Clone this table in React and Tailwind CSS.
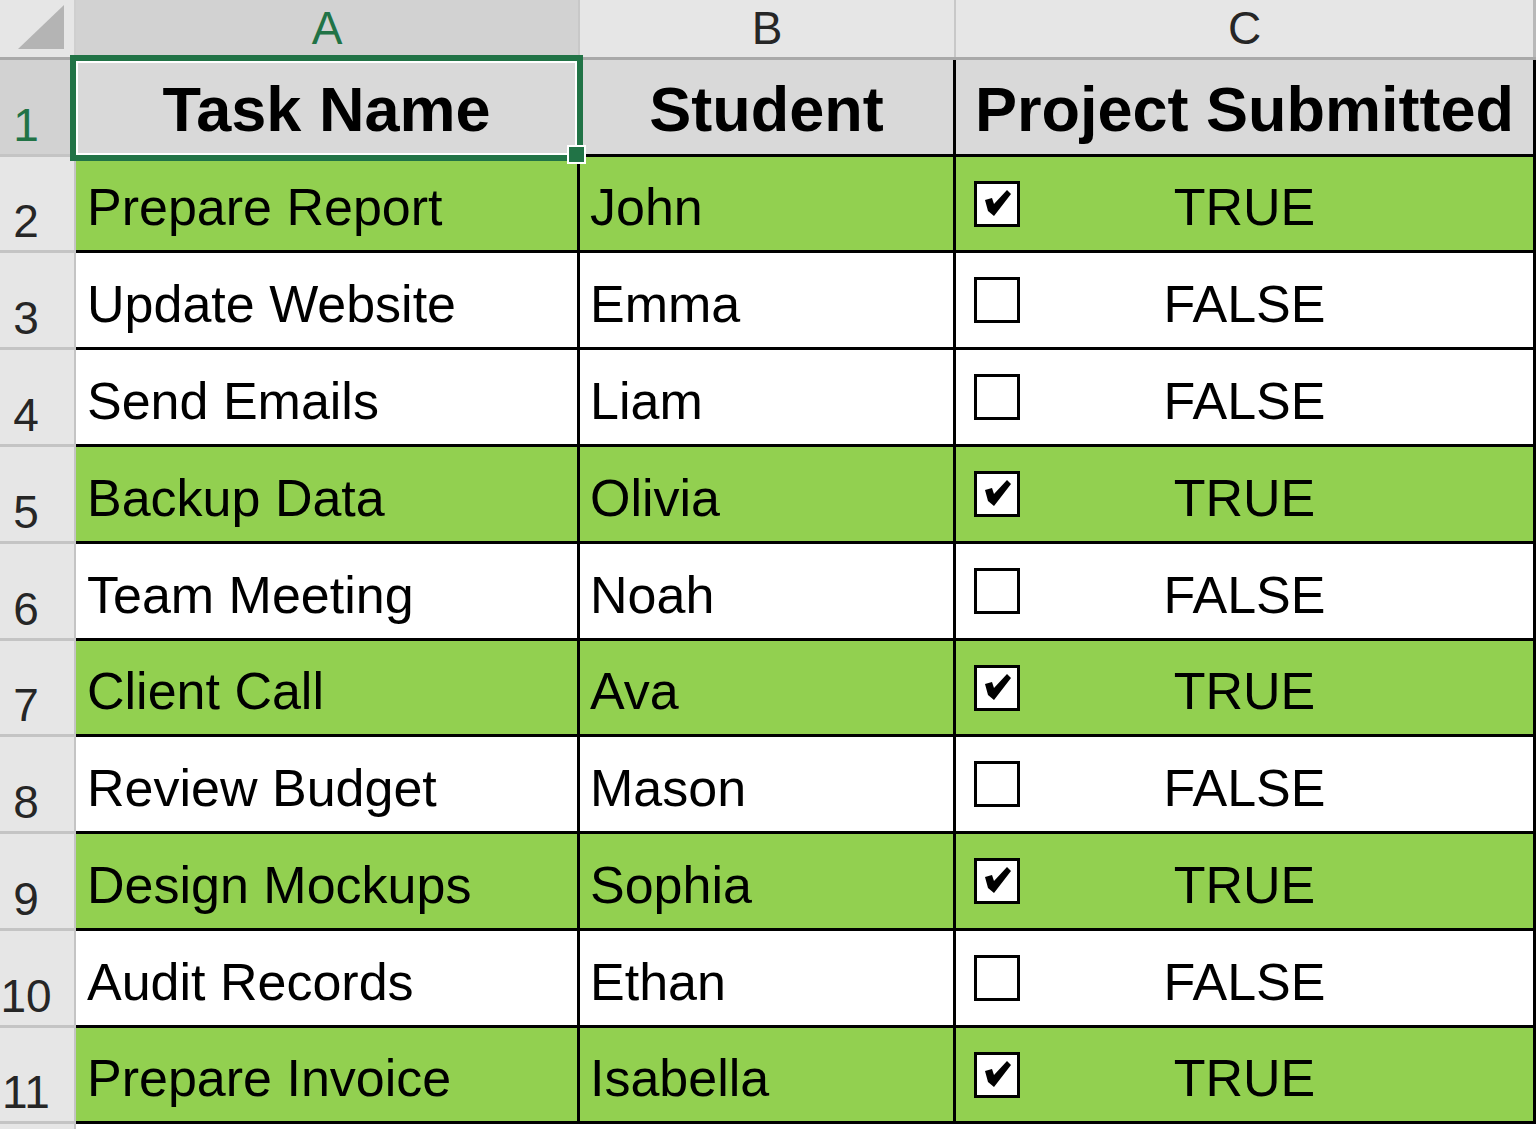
import React from 'react';

const rows = [
  { task: 'Prepare Report', student: 'John', done: true, h: 'h-[96px]' },
  { task: 'Update Website', student: 'Emma', done: false, h: 'h-[97px]' },
  { task: 'Send Emails', student: 'Liam', done: false, h: 'h-[97px]' },
  { task: 'Backup Data', student: 'Olivia', done: true, h: 'h-[97px]' },
  { task: 'Team Meeting', student: 'Noah', done: false, h: 'h-[97px]' },
  { task: 'Client Call', student: 'Ava', done: true, h: 'h-[96px]' },
  { task: 'Review Budget', student: 'Mason', done: false, h: 'h-[97px]' },
  { task: 'Design Mockups', student: 'Sophia', done: true, h: 'h-[97px]' },
  { task: 'Audit Records', student: 'Ethan', done: false, h: 'h-[97px]' },
  { task: 'Prepare Invoice', student: 'Isabella', done: true, h: 'h-[96px]' },
];

function Checkbox({ checked }) {
  return (
    <div className="absolute left-[18px] top-1/2 -translate-y-1/2 h-[46px] w-[46px] border-[3px] border-black bg-white">
      {checked && (
        <svg viewBox="0 0 46 46" className="absolute -left-[3px] -top-[3px] h-[46px] w-[46px]">
          <polygon points="11,19 18,17 20,23 33,9 37,13 20,35 14,30" fill="#000" />
        </svg>
      )}
    </div>
  );
}

function RowHeader({ n, selected }) {
  return (
    <div
      className={`w-[76px] shrink-0 flex items-end pb-[6px] border-r-2 border-b-[3px] border-[#c4c4c4] ${
        selected ? 'bg-[#d2d2d2] text-[#217346]' : 'bg-[#e6e6e6] text-[#262626]'
      }`}
    >
      <span className="w-[52px] text-center text-[46px] leading-none">{n}</span>
    </div>
  );
}

export default function App() {
  return (
    <div className="w-[1536px] h-[1129px] bg-white overflow-hidden font-['Liberation_Sans',Arial,sans-serif] text-black">
      {/* column letters */}
      <div className="flex h-[60px] border-b-[3px] border-[#a9a9a9] bg-[#e6e6e6]">
        <div className="w-[76px] shrink-0 border-r-2 border-[#cfcfcf] relative">
          <svg viewBox="0 0 76 57" className="absolute inset-0 h-[57px] w-[76px]">
            <polygon points="18,49 64,49 64,5" fill="#b4b4b4" />
          </svg>
        </div>
        <div className="w-[504px] shrink-0 bg-[#d2d2d2] border-r-2 border-[#c8c8c8] flex justify-center pt-[5px] text-[46px] leading-none text-[#217346]">
          A
        </div>
        <div className="w-[376px] shrink-0 border-r-2 border-[#c8c8c8] flex justify-center pt-[5px] text-[46px] leading-none text-[#262626]">
          B
        </div>
        <div className="flex-1 border-r-[3px] border-[#b8b8b8] flex justify-center pt-[5px] text-[46px] leading-none text-[#262626]">
          C
        </div>
      </div>

      {/* header row */}
      <div className="flex h-[97px]">
        <RowHeader n={1} selected />
        <div className="relative w-[504px] shrink-0 bg-[#d9d9d9] border-r-[3px] border-b-[3px] border-black flex items-center justify-center pt-[4px] text-[63px] font-bold leading-none">
          Task Name
          <div className="absolute -left-[6px] -top-[5px] -right-[6px] -bottom-[7px] z-10 border-[6px] border-[#217346] shadow-[inset_0_0_0_2px_white]">
            <div className="absolute -right-[9px] -bottom-[9px] h-[19px] w-[19px] bg-[#217346] border-2 border-white" />
          </div>
        </div>
        <div className="w-[376px] shrink-0 bg-[#d9d9d9] border-r-[3px] border-b-[3px] border-black flex items-center justify-center pt-[4px] text-[63px] font-bold leading-none">
          Student
        </div>
        <div className="flex-1 bg-[#d9d9d9] border-r-[3px] border-b-[3px] border-black flex items-center justify-center pt-[4px] text-[63px] font-bold leading-none">
          Project Submitted
        </div>
      </div>

      {/* data rows */}
      {rows.map((r, i) => {
        const bg = r.done ? 'bg-[#92d050]' : 'bg-white';
        return (
          <div key={r.task} className={`flex ${r.h}`}>
            <RowHeader n={i + 2} />
            <div className={`w-[504px] shrink-0 ${bg} border-r-[3px] border-b-[3px] border-black flex items-center pl-[11px] pt-[7px] text-[52px] leading-none`}>
              {r.task}
            </div>
            <div className={`w-[376px] shrink-0 ${bg} border-r-[3px] border-b-[3px] border-black flex items-center pl-[10px] pt-[7px] text-[52px] leading-none`}>
              {r.student}
            </div>
            <div className={`relative flex-1 ${bg} border-r-[3px] border-b-[3px] border-black flex items-center justify-center pt-[7px] text-[52px] leading-none`}>
              <Checkbox checked={r.done} />
              {r.done ? 'TRUE' : 'FALSE'}
            </div>
          </div>
        );
      })}

      <div className="flex h-[6px]">
        <div className="w-[76px] shrink-0 bg-[#e6e6e6] border-r-2 border-[#c4c4c4]" />
      </div>
    </div>
  );
}
